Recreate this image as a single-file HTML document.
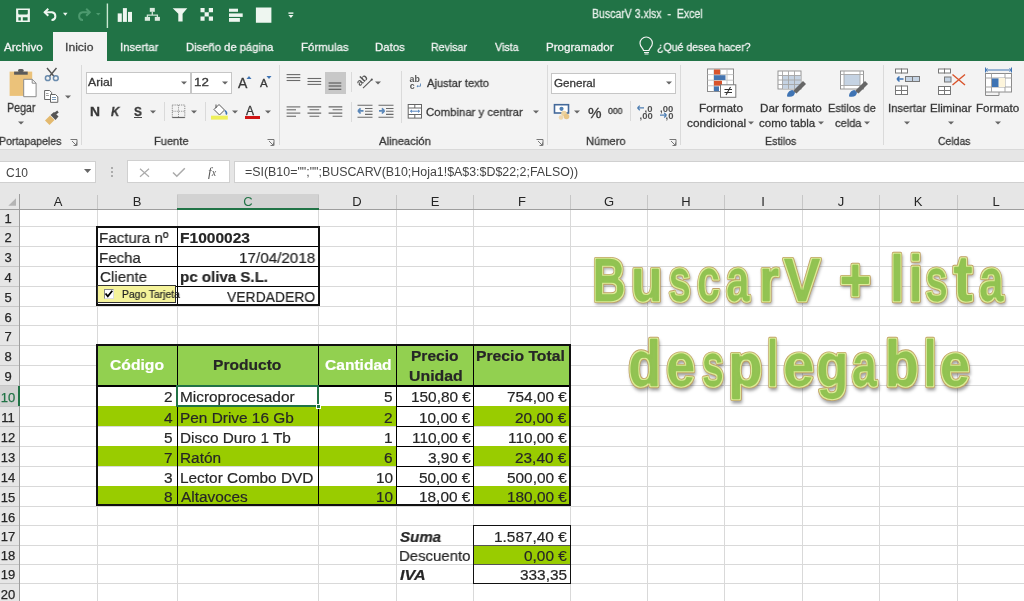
<!DOCTYPE html>
<html><head><meta charset="utf-8"><style>
html,body{margin:0;padding:0;width:1024px;height:601px;overflow:hidden;background:#fff;}
body{position:relative;font-family:"Liberation Sans", sans-serif;}
.r{position:absolute;box-sizing:border-box;}
.t{position:absolute;white-space:nowrap;line-height:1;will-change:transform;}
svg.r{overflow:visible;}
</style></head><body>
<div class="r" style="left:0.00px;top:0.00px;width:1024.00px;height:61.00px;background:#217346"></div>
<div class="r" style="left:53.00px;top:32.00px;width:54.00px;height:29.00px;background:#f3f3f3"></div>
<div class="r" style="left:0.00px;top:61.00px;width:1024.00px;height:88.00px;background:#f3f3f3"></div>
<div class="r" style="left:0.00px;top:149.00px;width:1024.00px;height:1.00px;background:#d9d9d9"></div>
<div class="r" style="left:0.00px;top:150.00px;width:1024.00px;height:60.00px;background:#e6e6e6"></div>
<svg class="r" style="left:0px;top:0px" width="300" height="32" viewBox="0 0 300 32">
<g fill="#eef6f0">
<path d="M16.1 8.4h13.8v13.5h-13.8z M18.2 9.9v3.4a1.2 1.2 0 0 0 1.2 1.2h7.2a1.2 1.2 0 0 0 1.2-1.2v-3.4z M18.4 17.3v3.2h2.4v-3.2z M22.8 17.3v3.2h4.8v-3.2z" fill-rule="evenodd"/>
</g>
<path d="M44.5 12.2h7.5a4 4 0 0 1 0 7.9h-0.5" stroke="#eef6f0" stroke-width="2" fill="none"/>
<path d="M48.3 8.8l-3.6 3.4 3.6 3.6" stroke="#eef6f0" stroke-width="2" fill="none"/>
<path d="M63 12.8h4.6l-2.3 2.9z" fill="#eef6f0"/>
<path d="M90 12.2h-7.5a4 4 0 0 0 0 7.9h0.5" stroke="#4d9a6f" stroke-width="2" fill="none"/>
<path d="M86.2 8.8l3.6 3.4-3.6 3.6" stroke="#4d9a6f" stroke-width="2" fill="none"/>
<path d="M96 13h4.5l-2.25 2.5z" fill="#4d9a6f"/>
<rect x="106.7" y="3.5" width="1.4" height="24.5" fill="#c9e7d2"/>
<g fill="#eef6f0">
 <rect x="117.7" y="13.4" width="4.1" height="8.5"/><rect x="122.9" y="8.1" width="4" height="13.8"/><rect x="128" y="11.9" width="4" height="10"/>
</g>
<g fill="#dcebe0">
 <rect x="149.8" y="7.9" width="5" height="3.9"/><rect x="144.8" y="16.9" width="5.2" height="3.9"/><rect x="154.8" y="16.9" width="5.1" height="3.9"/>
</g>
<path d="M152.3 11.8v3.3 M147.4 16.9v-1.8h10v1.8" stroke="#cfe3d5" stroke-width="1.3" fill="none"/>
<path d="M172.7 8.3h14.6l-4.7 5.5v7.8h-4.3v-7.8z" fill="#eef6f0"/>
<path d="M200.5 7.9h12.5v12.9h-12.5z M204.6 7.9v4.3h4.2v-4.3z M200.5 12.2v4.3h4.1v-4.3z M208.8 12.2v4.3h4.2v-4.3z M204.6 16.5v4.3h4.2v-4.3z" fill-rule="evenodd" fill="#eef6f0"/>
<g fill="#eef6f0"><rect x="229" y="8.7" width="9" height="3.1"/><rect x="229" y="13.4" width="13.7" height="3.5"/><rect x="229" y="18" width="10.9" height="3.8"/></g>
<rect x="255.9" y="7.5" width="15.5" height="15.25" fill="#eef6f0"/>
<rect x="288.4" y="12.4" width="5" height="1.4" fill="#eef6f0"/><path d="M288.4 14.9h5l-2.5 3.1z" fill="#eef6f0"/>
</svg>
<div class="t" style="left:591.93px;top:8.14px;font-size:12px;color:#e6efe9;font-weight:normal;font-style:normal;transform:scaleX(0.8772);transform-origin:left top;-webkit-text-stroke:0.3px #e6efe9;">BuscarV 3.xlsx&nbsp; -&nbsp; Excel</div>
<div class="t" style="left:4.30px;top:41.57px;font-size:11.5px;color:#f3f3f3;font-weight:normal;font-style:normal;transform:scaleX(1.0079);transform-origin:left top;-webkit-text-stroke:0.3px #f3f3f3;">Archivo</div>
<div class="t" style="left:64.94px;top:41.57px;font-size:11.5px;color:#444444;font-weight:normal;font-style:normal;transform:scaleX(1.0588);transform-origin:left top;-webkit-text-stroke:0.3px #444444;">Inicio</div>
<div class="t" style="left:120.32px;top:41.57px;font-size:11.5px;color:#f3f3f3;font-weight:normal;font-style:normal;transform:scaleX(0.9848);transform-origin:left top;-webkit-text-stroke:0.3px #f3f3f3;">Insertar</div>
<div class="t" style="left:185.65px;top:41.57px;font-size:11.5px;color:#f3f3f3;font-weight:normal;font-style:normal;transform:scaleX(0.9769);transform-origin:left top;-webkit-text-stroke:0.3px #f3f3f3;">Diseño de página</div>
<div class="t" style="left:300.53px;top:41.57px;font-size:11.5px;color:#f3f3f3;font-weight:normal;font-style:normal;transform:scaleX(0.9909);transform-origin:left top;-webkit-text-stroke:0.3px #f3f3f3;">Fórmulas</div>
<div class="t" style="left:374.63px;top:41.57px;font-size:11.5px;color:#f3f3f3;font-weight:normal;font-style:normal;transform:scaleX(0.9913);transform-origin:left top;-webkit-text-stroke:0.3px #f3f3f3;">Datos</div>
<div class="t" style="left:431.19px;top:41.57px;font-size:11.5px;color:#f3f3f3;font-weight:normal;font-style:normal;transform:scaleX(0.9211);transform-origin:left top;-webkit-text-stroke:0.3px #f3f3f3;">Revisar</div>
<div class="t" style="left:494.80px;top:41.57px;font-size:11.5px;color:#f3f3f3;font-weight:normal;font-style:normal;transform:scaleX(0.9294);transform-origin:left top;-webkit-text-stroke:0.3px #f3f3f3;">Vista</div>
<div class="t" style="left:545.52px;top:41.57px;font-size:11.5px;color:#f3f3f3;font-weight:normal;font-style:normal;transform:scaleX(1.0072);transform-origin:left top;-webkit-text-stroke:0.3px #f3f3f3;">Programador</div>
<svg class="r" style="left:636px;top:36px" width="20" height="20" viewBox="636 36 20 20"><path d="M643.5 50.5c0-2.2-3.5-3.7-3.5-7.3a6.2 6.2 0 0 1 12.4 0c0 3.6-3.5 5.1-3.5 7.3z M644 52.5h5 M644.5 54h4" fill="none" stroke="#f3f3f3" stroke-width="1.2"/></svg>
<div class="t" style="left:656.82px;top:41.57px;font-size:11.5px;color:#f3f3f3;font-weight:normal;font-style:normal;transform:scaleX(0.9202);transform-origin:left top;-webkit-text-stroke:0.3px #f3f3f3;">¿Qué desea hacer?</div>
<svg class="r" style="left:8px;top:66px" width="32" height="34" viewBox="8 66 32 34">
<rect x="9.6" y="71.6" width="22.6" height="24.3" fill="#ebc27a"/>
<rect x="14.1" y="71.6" width="13.6" height="3.1" fill="#5b5b5b"/>
<rect x="18" y="69" width="5.7" height="3" rx="1.5" fill="#5b5b5b"/>
<path d="M23.7 79.3h8.5l3.9 3.9v13.5h-12.4z" fill="#fff" stroke="#8a8a8a" stroke-width="1"/>
<path d="M32.2 79.3v3.9h3.9" fill="none" stroke="#8a8a8a" stroke-width="1"/>
</svg>
<div class="t" style="left:6.62px;top:102.34px;font-size:12px;color:#383838;font-weight:normal;font-style:normal;transform:scaleX(0.8903);transform-origin:left top;-webkit-text-stroke:0.3px #383838;">Pegar</div>
<svg class="r" style="left:18px;top:120.5px" width="6" height="4" viewBox="0 0 6 4"><path d="M0 0.5h6l-3 3z" fill="#666"/></svg>
<svg class="r" style="left:43px;top:66px" width="18" height="16" viewBox="43 66 18 16">
<path d="M47 68l7.5 9 M56.5 68l-7.5 9" stroke="#555" stroke-width="1.4" fill="none"/>
<circle cx="47.8" cy="78.2" r="2.4" fill="none" stroke="#6a8cae" stroke-width="1.5"/>
<circle cx="55.8" cy="78.2" r="2.4" fill="none" stroke="#6a8cae" stroke-width="1.5"/>
</svg>
<svg class="r" style="left:43px;top:89px" width="18" height="15" viewBox="43 89 18 15">
<path d="M44.6 90.5h5l2 2v7h-7z" fill="#fff" stroke="#666" stroke-width="1"/>
<path d="M50.5 94.5h5l2.3 2.3v5.5h-7.3z" fill="#fff" stroke="#666" stroke-width="1"/>
<path d="M52 97.5h4 M52 99.5h4" stroke="#6a8cae" stroke-width="0.9"/>
<path d="M46 93.5h2.5 M46 95.5h3" stroke="#888" stroke-width="0.8"/>
</svg>
<svg class="r" style="left:64.6px;top:95px" width="6" height="4" viewBox="0 0 6 4"><path d="M0 0.5h6l-3 3z" fill="#666"/></svg>
<svg class="r" style="left:43px;top:110px" width="18" height="16" viewBox="43 110 18 16">
<path d="M45 120.5l5-5 4.5 4.5-5 5z" fill="#e3b96e"/>
<path d="M50.5 115l3.5-3 4.5 4.5-3 3.5z" fill="#555"/>
<path d="M54 114.5l4-3" stroke="#555" stroke-width="2.5"/>
</svg>
<div class="t" style="left:-0.81px;top:135.57px;font-size:11.5px;color:#383838;font-weight:normal;font-style:normal;transform:scaleX(0.9218);transform-origin:left top;-webkit-text-stroke:0.3px #383838;">Portapapeles</div>
<svg class="r" style="left:69.6px;top:138.5px" width="8" height="7" viewBox="69.6 138.5 8 7"><path d="M70.1 139.0h6.5v6" fill="none" stroke="#777" stroke-width="1"/><path d="M71.6 140.5l4.5 4.5 M76.1 142.0v3h-3" fill="none" stroke="#777" stroke-width="1"/></svg>
<div class="r" style="left:80.50px;top:65.00px;width:1.00px;height:80.00px;background:#dadada"></div>
<div class="r" style="left:85.50px;top:72.10px;width:105.00px;height:21.50px;background:#fff;border:1px solid #c6c6c6"></div>
<div class="r" style="left:190.50px;top:72.10px;width:41.00px;height:21.50px;background:#fff;border:1px solid #c6c6c6"></div>
<div class="t" style="left:88.20px;top:77.27px;font-size:11.5px;color:#383838;font-weight:normal;font-style:normal;transform:scaleX(1.0637);transform-origin:left top;-webkit-text-stroke:0.3px #383838;">Arial</div>
<svg class="r" style="left:180.5px;top:80.7px" width="6" height="4" viewBox="0 0 6 4"><path d="M0 0.5h6l-3 3z" fill="#666"/></svg>
<div class="t" style="left:193.78px;top:77.27px;font-size:11.5px;color:#383838;font-weight:normal;font-style:normal;transform:scaleX(1.1604);transform-origin:left top;-webkit-text-stroke:0.3px #383838;">12</div>
<svg class="r" style="left:221.5px;top:80.7px" width="6" height="4" viewBox="0 0 6 4"><path d="M0 0.5h6l-3 3z" fill="#666"/></svg>
<div class="t" style="left:238.00px;top:75.85px;font-size:14px;color:#383838;font-weight:normal;font-style:normal;-webkit-text-stroke:0.3px #383838;">A</div>
<svg class="r" style="left:246px;top:75px" width="6" height="5" viewBox="246 75 6 5"><path d="M246.5 79h5l-2.5-3z" fill="#3f74b4"/></svg>
<div class="t" style="left:260.00px;top:77.97px;font-size:11.5px;color:#383838;font-weight:normal;font-style:normal;-webkit-text-stroke:0.3px #383838;">A</div>
<svg class="r" style="left:266px;top:75px" width="6" height="5" viewBox="266 75 6 5"><path d="M266.5 76h5l-2.5 3z" fill="#3f74b4"/></svg>
<div class="t" style="left:90.44px;top:105.54px;font-size:12px;color:#383838;font-weight:bold;font-style:normal;transform:scaleX(1.1509);transform-origin:left top;-webkit-text-stroke:0.3px #383838;">N</div>
<div class="t" style="left:110.88px;top:105.54px;font-size:12px;color:#383838;font-weight:bold;font-style:italic;transform:scaleX(0.9600);transform-origin:left top;-webkit-text-stroke:0.3px #383838;">K</div>
<div class="t" style="left:134.06px;top:105.54px;font-size:12px;color:#383838;font-weight:bold;font-style:normal;transform:scaleX(0.9763);transform-origin:left top;-webkit-text-stroke:0.3px #383838;">S</div>
<div class="r" style="left:133.80px;top:117.00px;width:8.50px;height:1.30px;background:#444"></div>
<svg class="r" style="left:150.2px;top:110px" width="6" height="4" viewBox="0 0 6 4"><path d="M0 0.5h6l-3 3z" fill="#666"/></svg>
<div class="r" style="left:163.60px;top:102.00px;width:1.00px;height:19.00px;background:#dadada"></div>
<svg class="r" style="left:171px;top:104px" width="16" height="15" viewBox="171 104 16 15">
<rect x="172.3" y="105" width="12.5" height="12.5" fill="none" stroke="#888" stroke-width="1" stroke-dasharray="1.2 1"/>
<path d="M178.5 105v12.5 M172.3 111.25h12.5" stroke="#999" stroke-width="1" stroke-dasharray="1.2 1"/>
<path d="M172.3 117.5h12.5" stroke="#666" stroke-width="1.2"/>
</svg>
<svg class="r" style="left:191.3px;top:110px" width="6" height="4" viewBox="0 0 6 4"><path d="M0 0.5h6l-3 3z" fill="#666"/></svg>
<div class="r" style="left:204.60px;top:102.00px;width:1.00px;height:19.00px;background:#dadada"></div>
<svg class="r" style="left:210px;top:102px" width="20" height="19" viewBox="210 102 20 19">
<path d="M214 109.5l5-5 5.5 5.5-5 5z" fill="#fff" stroke="#555" stroke-width="1"/>
<path d="M216 104.5v3.5" stroke="#555" stroke-width="1"/>
<path d="M225 110.5c1.5 1.5 2 3 1 4" fill="none" stroke="#3f74b4" stroke-width="1.6"/>
<rect x="211" y="115.7" width="16.8" height="3.9" fill="#eef05a"/>
</svg>
<svg class="r" style="left:232.3px;top:110px" width="6" height="4" viewBox="0 0 6 4"><path d="M0 0.5h6l-3 3z" fill="#666"/></svg>
<div class="t" style="left:245.50px;top:104.54px;font-size:12px;color:#383838;font-weight:normal;font-style:normal;-webkit-text-stroke:0.3px #383838;">A</div>
<div class="r" style="left:245.00px;top:116.00px;width:14.70px;height:2.80px;background:#d01515"></div>
<svg class="r" style="left:264.9px;top:110px" width="6" height="4" viewBox="0 0 6 4"><path d="M0 0.5h6l-3 3z" fill="#666"/></svg>
<div class="t" style="left:154.36px;top:135.77px;font-size:11.5px;color:#383838;font-weight:normal;font-style:normal;transform:scaleX(0.9623);transform-origin:left top;-webkit-text-stroke:0.3px #383838;">Fuente</div>
<svg class="r" style="left:266.5px;top:138.5px" width="8" height="7" viewBox="266.5 138.5 8 7"><path d="M267.0 139.0h6.5v6" fill="none" stroke="#777" stroke-width="1"/><path d="M268.5 140.5l4.5 4.5 M273.0 142.0v3h-3" fill="none" stroke="#777" stroke-width="1"/></svg>
<div class="r" style="left:278.80px;top:65.00px;width:1.00px;height:80.00px;background:#dadada"></div>
<svg class="r" style="left:284px;top:70px" width="64" height="26" viewBox="284 70 64 26"><path d="M286.6 74.6H300.3" stroke="#6a6a6a" stroke-width="1.1"/><path d="M286.6 77.6H300.3" stroke="#6a6a6a" stroke-width="1.1"/><path d="M286.6 80.5H300.3" stroke="#6a6a6a" stroke-width="1.1"/><path d="M307.5 78.5H321.2" stroke="#6a6a6a" stroke-width="1.1"/><path d="M307.5 81.5H321.2" stroke="#6a6a6a" stroke-width="1.1"/><path d="M307.5 84.4H321.2" stroke="#6a6a6a" stroke-width="1.1"/></svg>
<div class="r" style="left:324.70px;top:72.10px;width:21.10px;height:21.50px;background:#c8c8c8"></div>
<svg class="r" style="left:326px;top:80px" width="18" height="12" viewBox="326 80 18 12"><path d="M328.6 83H341.3" stroke="#555" stroke-width="1.1"/><path d="M328.6 86H341.3" stroke="#555" stroke-width="1.1"/><path d="M328.6 89.3H341.3" stroke="#555" stroke-width="1.1"/></svg>
<div class="r" style="left:350.50px;top:72.00px;width:1.00px;height:20.00px;background:#dadada"></div>
<div class="r" style="left:350.50px;top:102.00px;width:1.00px;height:19.50px;background:#dadada"></div>
<svg class="r" style="left:355px;top:73px" width="20" height="18" viewBox="355 73 20 18">
<text x="0" y="0" font-size="10" font-weight="bold" font-family="Liberation Sans" fill="#555" transform="translate(360 86.5) rotate(-45)">ab</text>
<path d="M363 88.2l8.5-8.3" stroke="#555" stroke-width="1.1"/><circle cx="371.8" cy="79.6" r="1.1" fill="#555"/>
</svg>
<svg class="r" style="left:375.4px;top:80.7px" width="6" height="4" viewBox="0 0 6 4"><path d="M0 0.5h6l-3 3z" fill="#666"/></svg>
<div class="r" style="left:400.50px;top:70.70px;width:1.00px;height:52.80px;background:#dadada"></div>
<svg class="r" style="left:407px;top:73px" width="18" height="18" viewBox="407 73 18 18">
<text x="409.5" y="81.6" font-size="8.8" font-weight="bold" font-family="Liberation Sans" fill="#555">ab</text>
<text x="409.8" y="88.6" font-size="8.8" font-weight="bold" font-family="Liberation Sans" fill="#555">c</text>
<path d="M420.5 83.5v2.7h-3" fill="none" stroke="#5b87b8" stroke-width="0.9"/><path d="M416.5 86.2l1.5-1.2v2.4z" fill="#5b87b8"/>
</svg>
<div class="t" style="left:426.80px;top:77.57px;font-size:11.5px;color:#383838;font-weight:normal;font-style:normal;transform:scaleX(0.9701);transform-origin:left top;-webkit-text-stroke:0.3px #383838;">Ajustar texto</div>
<svg class="r" style="left:284px;top:104px" width="64" height="15" viewBox="284 104 64 15"><path d="M286.6 106.9H300.3" stroke="#6a6a6a" stroke-width="1.1"/><path d="M286.6 109.8H296" stroke="#6a6a6a" stroke-width="1.1"/><path d="M286.6 113.1H300.3" stroke="#6a6a6a" stroke-width="1.1"/><path d="M286.6 116.25H296" stroke="#6a6a6a" stroke-width="1.1"/><path d="M307.5 106.9h13.7 M309.5 109.8h9.7 M307.5 113.1h13.7 M309.5 116.25h9.7" stroke="#6a6a6a" stroke-width="1.1"/><path d="M328.6 106.9h13.7 M332.6 109.8h9.7 M328.6 113.1h13.7 M332.6 116.25h9.7" stroke="#6a6a6a" stroke-width="1.1"/></svg>
<svg class="r" style="left:355px;top:103px" width="40" height="17" viewBox="355 103 40 17">
<path d="M357.5 105.3h15 M365 108.5h7.5 M365 111.2h7.5 M365 114.4h7.5 M357.5 117.2h15" stroke="#6a6a6a" stroke-width="1.1"/>
<path d="M358 110.9h5.5 M358 110.9l2.6-2.6 M358 110.9l2.6 2.6" stroke="#5b87b8" stroke-width="1.7" fill="none"/>
<path d="M378.5 105.3h15 M386 108.5h7.5 M386 111.2h7.5 M386 114.4h7.5 M378.5 117.2h15" stroke="#6a6a6a" stroke-width="1.1"/>
<path d="M379 110.9h5.5 M384.5 110.9l-2.6-2.6 M384.5 110.9l-2.6 2.6" stroke="#5b87b8" stroke-width="1.7" fill="none"/>
</svg>
<svg class="r" style="left:406px;top:103px" width="18" height="17" viewBox="406 103 18 17">
<rect x="408.2" y="104.5" width="13.3" height="13.6" fill="#fff" stroke="#666" stroke-width="1"/>
<path d="M408.2 108h13.3 M408.2 114.5h13.3 M414.8 104.5v3.5 M414.8 114.5v3.5" stroke="#666" stroke-width="1"/>
<path d="M410.5 111.2h9 M410.5 111.2l1.5-1.3 M410.5 111.2l1.5 1.3 M419.5 111.2l-1.5-1.3 M419.5 111.2l-1.5 1.3" stroke="#3f74b4" stroke-width="0.9"/>
</svg>
<div class="t" style="left:426.30px;top:106.87px;font-size:11.5px;color:#383838;font-weight:normal;font-style:normal;transform:scaleX(0.9902);transform-origin:left top;-webkit-text-stroke:0.3px #383838;">Combinar y centrar</div>
<svg class="r" style="left:532.6px;top:110.3px" width="6" height="4" viewBox="0 0 6 4"><path d="M0 0.5h6l-3 3z" fill="#666"/></svg>
<div class="t" style="left:379.40px;top:135.77px;font-size:11.5px;color:#383838;font-weight:normal;font-style:normal;transform:scaleX(0.9757);transform-origin:left top;-webkit-text-stroke:0.3px #383838;">Alineación</div>
<svg class="r" style="left:536.2px;top:138.5px" width="8" height="7" viewBox="536.2 138.5 8 7"><path d="M536.7 139.0h6.5v6" fill="none" stroke="#777" stroke-width="1"/><path d="M538.2 140.5l4.5 4.5 M542.7 142.0v3h-3" fill="none" stroke="#777" stroke-width="1"/></svg>
<div class="r" style="left:546.60px;top:65.00px;width:1.00px;height:80.00px;background:#dadada"></div>
<div class="r" style="left:551.25px;top:72.50px;width:124.35px;height:21.10px;background:#fff;border:1px solid #c6c6c6"></div>
<div class="t" style="left:554.29px;top:77.57px;font-size:11.5px;color:#383838;font-weight:normal;font-style:normal;transform:scaleX(1.0113);transform-origin:left top;-webkit-text-stroke:0.3px #383838;">General</div>
<svg class="r" style="left:665.9px;top:80.7px" width="6" height="4" viewBox="0 0 6 4"><path d="M0 0.5h6l-3 3z" fill="#666"/></svg>
<svg class="r" style="left:552px;top:102px" width="20" height="19" viewBox="552 102 20 19">
<rect x="554.5" y="104.7" width="14" height="8.3" fill="#fff" stroke="#44699a" stroke-width="1.6"/>
<circle cx="561.5" cy="108.8" r="2.1" fill="#4f7fb3"/>
<circle cx="564" cy="113.5" r="2.8" fill="#ecd3a0"/><circle cx="566.5" cy="116.5" r="2.8" fill="#e8c688"/><circle cx="561" cy="117.5" r="2.3" fill="#eed8b0"/>
</svg>
<svg class="r" style="left:574.2px;top:110px" width="6" height="4" viewBox="0 0 6 4"><path d="M0 0.5h6l-3 3z" fill="#666"/></svg>
<div class="t" style="left:587.86px;top:105.95px;font-size:14px;color:#383838;font-weight:normal;font-style:normal;transform:scaleX(1.0870);transform-origin:left top;-webkit-text-stroke:0.3px #383838;">%</div>
<div class="t" style="left:607.76px;top:107.08px;font-size:9px;color:#383838;font-weight:normal;font-style:normal;transform:scaleX(0.9655);transform-origin:left top;-webkit-text-stroke:0.3px #383838;">000</div>
<div class="r" style="left:629.80px;top:101.40px;width:1.00px;height:19.60px;background:#dadada"></div>
<svg class="r" style="left:635px;top:103px" width="40" height="17" viewBox="635 103 40 17">
<g font-size="9.5" font-weight="bold" font-family="Liberation Sans" fill="#505050">
<text x="644.5" y="111.6">,0</text>
<text x="639.5" y="118.8">,00</text>
<text x="660" y="111.6">,00</text>
<text x="665.5" y="118.8">,0</text>
</g>
<path d="M637.5 107.9h6.5 M637.5 107.9l2.3-2.3 M637.5 107.9l2.3 2.3" stroke="#4f7fb3" stroke-width="1.3" fill="none"/>
<path d="M660 115.2h6.5 M666.5 115.2l-2.3-2.3 M666.5 115.2l-2.3 2.3" stroke="#4f7fb3" stroke-width="1.3" fill="none"/>
</svg>
<div class="t" style="left:586.05px;top:135.77px;font-size:11.5px;color:#383838;font-weight:normal;font-style:normal;transform:scaleX(0.9666);transform-origin:left top;-webkit-text-stroke:0.3px #383838;">Número</div>
<svg class="r" style="left:669.4px;top:138.5px" width="8" height="7" viewBox="669.4 138.5 8 7"><path d="M669.9 139.0h6.5v6" fill="none" stroke="#777" stroke-width="1"/><path d="M671.4 140.5l4.5 4.5 M675.9 142.0v3h-3" fill="none" stroke="#777" stroke-width="1"/></svg>
<div class="r" style="left:680.30px;top:65.00px;width:1.00px;height:80.00px;background:#dadada"></div>
<svg class="r" style="left:705px;top:66px" width="34" height="33" viewBox="705 66 34 33">
<rect x="707.5" y="69" width="26" height="22.5" fill="#fff" stroke="#8c8c8c" stroke-width="1"/>
<path d="M707.5 74.6h26 M707.5 80.2h26 M707.5 85.8h26 M714 69v22.5 M720.5 69v22.5 M727 69v22.5" stroke="#c0c0c0" stroke-width="0.9"/>
<rect x="714" y="69.5" width="6" height="5" fill="#d9542c"/>
<rect x="714" y="75.2" width="11.5" height="4.8" fill="#4575b0"/>
<rect x="714" y="80.8" width="8" height="4.8" fill="#d9542c"/>
<rect x="714" y="86.4" width="5" height="4.8" fill="#4575b0"/>
<rect x="720.5" y="84.8" width="15.3" height="12.5" fill="#fff" stroke="#777" stroke-width="1"/>
<path d="M724.5 89.5h7.5 M724.5 92.5h7.5 M730.5 87l-4.5 8" stroke="#333" stroke-width="1.1"/>
</svg>
<div class="t" style="left:698.60px;top:102.77px;font-size:11.5px;color:#383838;font-weight:normal;font-style:normal;transform:scaleX(1.0265);transform-origin:left top;-webkit-text-stroke:0.3px #383838;">Formato</div>
<div class="t" style="left:687.02px;top:117.87px;font-size:11.5px;color:#383838;font-weight:normal;font-style:normal;transform:scaleX(1.0265);transform-origin:left top;-webkit-text-stroke:0.3px #383838;">condicional</div>
<svg class="r" style="left:748.3px;top:120.5px" width="6" height="4" viewBox="0 0 6 4"><path d="M0 0.5h6l-3 3z" fill="#666"/></svg>
<svg class="r" style="left:775px;top:68px" width="34" height="31" viewBox="775 68 34 31">
<rect x="778" y="71" width="23" height="18" fill="#fff" stroke="#8c8c8c" stroke-width="0.9"/>
<rect x="782.5" y="75.5" width="18" height="13" fill="#c5d3e3"/>
<path d="M778 75.5h23 M778 80h23 M778 84.5h23 M782.5 71v18 M788.5 71v18 M794.5 71v18" stroke="#a5a5a5" stroke-width="0.9"/>
<path d="M793 91l10-10 3 3-9.5 9.5z" fill="#666"/>
<path d="M787 96.5c0-3.5 2-6 5.5-6.5 l2.5 2.5c-0.5 3.5-3 5-8 4z" fill="#3f74b4"/>
</svg>
<div class="t" style="left:759.61px;top:102.77px;font-size:11.5px;color:#383838;font-weight:normal;font-style:normal;transform:scaleX(1.0168);transform-origin:left top;-webkit-text-stroke:0.3px #383838;">Dar formato</div>
<div class="t" style="left:758.62px;top:117.87px;font-size:11.5px;color:#383838;font-weight:normal;font-style:normal;-webkit-text-stroke:0.3px #383838;">como tabla</div>
<svg class="r" style="left:817.6px;top:120.5px" width="6" height="4" viewBox="0 0 6 4"><path d="M0 0.5h6l-3 3z" fill="#666"/></svg>
<svg class="r" style="left:838px;top:68px" width="34" height="31" viewBox="838 68 34 31">
<rect x="840.5" y="71" width="23" height="18" fill="#fff" stroke="#8c8c8c" stroke-width="0.9"/>
<rect x="844" y="74.5" width="16" height="11" fill="#c5d3e3"/>
<path d="M840.5 74.5h23 M840.5 85.5h23 M844 71v18 M860 71v18" stroke="#a5a5a5" stroke-width="0.9"/>
<path d="M855 91l10-10 3 3-9.5 9.5z" fill="#666"/>
<path d="M849 96.5c0-3.5 2-6 5.5-6.5 l2.5 2.5c-0.5 3.5-3 5-8 4z" fill="#3f74b4"/>
</svg>
<div class="t" style="left:827.56px;top:102.77px;font-size:11.5px;color:#383838;font-weight:normal;font-style:normal;transform:scaleX(0.9584);transform-origin:left top;-webkit-text-stroke:0.3px #383838;">Estilos de</div>
<div class="t" style="left:834.94px;top:117.87px;font-size:11.5px;color:#383838;font-weight:normal;font-style:normal;transform:scaleX(0.9651);transform-origin:left top;-webkit-text-stroke:0.3px #383838;">celda</div>
<svg class="r" style="left:863.5px;top:120.5px" width="6" height="4" viewBox="0 0 6 4"><path d="M0 0.5h6l-3 3z" fill="#666"/></svg>
<div class="t" style="left:765.19px;top:135.77px;font-size:11.5px;color:#383838;font-weight:normal;font-style:normal;transform:scaleX(0.9257);transform-origin:left top;-webkit-text-stroke:0.3px #383838;">Estilos</div>
<div class="r" style="left:882.75px;top:65.00px;width:1.00px;height:80.00px;background:#dadada"></div>
<svg class="r" style="left:893px;top:66px" width="30" height="30" viewBox="893 66 30 30">
<g fill="#fff" stroke="#777" stroke-width="1">
<rect x="895.5" y="69" width="6" height="4"/><rect x="901.5" y="69" width="6" height="4"/>
<rect x="895.5" y="86" width="6" height="4.5"/><rect x="901.5" y="86" width="6" height="4.5"/>
<rect x="895.5" y="90.5" width="6" height="4"/><rect x="901.5" y="90.5" width="6" height="4"/>
</g>
<g fill="#c5d3e3" stroke="#777" stroke-width="1"><rect x="905.5" y="76.5" width="7" height="5"/><rect x="912.5" y="76.5" width="7" height="5"/></g>
<path d="M897 79h6.5 M897 79l2.5-2.5 M897 79l2.5 2.5" stroke="#3f74b4" stroke-width="1.5" fill="none"/>
</svg>
<div class="t" style="left:887.72px;top:102.77px;font-size:11.5px;color:#383838;font-weight:normal;font-style:normal;transform:scaleX(0.9769);transform-origin:left top;-webkit-text-stroke:0.3px #383838;">Insertar</div>
<svg class="r" style="left:904px;top:120.5px" width="6" height="4" viewBox="0 0 6 4"><path d="M0 0.5h6l-3 3z" fill="#666"/></svg>
<svg class="r" style="left:936px;top:66px" width="32" height="30" viewBox="936 66 32 30">
<g fill="#fff" stroke="#777" stroke-width="1">
<rect x="938.5" y="69" width="6" height="4"/><rect x="944.5" y="69" width="6" height="4"/>
<rect x="938.5" y="86.5" width="6" height="4"/><rect x="944.5" y="86.5" width="6" height="4"/>
<rect x="938.5" y="90.5" width="6" height="4"/><rect x="944.5" y="90.5" width="6" height="4"/>
</g>
<rect x="944.5" y="77" width="6.5" height="5" fill="#c5d3e3" stroke="#777" stroke-width="1"/>
<path d="M952.5 74.5l12.5 10.5 M965 74.5l-12.5 10.5" stroke="#d9542c" stroke-width="1.4"/>
</svg>
<div class="t" style="left:930.03px;top:102.77px;font-size:11.5px;color:#383838;font-weight:normal;font-style:normal;-webkit-text-stroke:0.3px #383838;">Eliminar</div>
<svg class="r" style="left:947.7px;top:120.5px" width="6" height="4" viewBox="0 0 6 4"><path d="M0 0.5h6l-3 3z" fill="#666"/></svg>
<svg class="r" style="left:983px;top:65px" width="32" height="33" viewBox="983 65 32 33">
<path d="M985.5 70h26 M985.5 67.5v5 M1011.5 67.5v5 M985.5 70l2-1.5 M985.5 70l2 1.5 M1011.5 70l-2-1.5 M1011.5 70l-2 1.5" stroke="#3f74b4" stroke-width="1" fill="none"/>
<rect x="985.5" y="73.5" width="26" height="18.5" fill="#fff" stroke="#8c8c8c" stroke-width="1"/>
<path d="M985.5 78h26 M985.5 87h26 M991.5 73.5v18.5 M1005 73.5v18.5" stroke="#a5a5a5" stroke-width="1"/>
<rect x="998.5" y="78" width="6.5" height="9" fill="#fdf5dc"/>
<rect x="992" y="78.5" width="6.5" height="8.5" fill="#3f74b4"/>
<path d="M985.5 92v3.5h13.5v-3.5" fill="none" stroke="#8c8c8c" stroke-width="1"/>
</svg>
<div class="t" style="left:975.92px;top:102.77px;font-size:11.5px;color:#383838;font-weight:normal;font-style:normal;transform:scaleX(1.0096);transform-origin:left top;-webkit-text-stroke:0.3px #383838;">Formato</div>
<svg class="r" style="left:994.6px;top:120.5px" width="6" height="4" viewBox="0 0 6 4"><path d="M0 0.5h6l-3 3z" fill="#666"/></svg>
<div class="t" style="left:938.25px;top:135.77px;font-size:11.5px;color:#383838;font-weight:normal;font-style:normal;transform:scaleX(0.9047);transform-origin:left top;-webkit-text-stroke:0.3px #383838;">Celdas</div>
<div class="r" style="left:-1.00px;top:160.50px;width:97.20px;height:22.80px;background:#fff;border:1px solid #d0d0d0"></div>
<div class="t" style="left:6.31px;top:167.04px;font-size:12px;color:#444;font-weight:normal;font-style:normal;transform:scaleX(0.9893);transform-origin:left top;">C10</div>
<svg class="r" style="left:83px;top:168px" width="10" height="6" viewBox="83 168 10 6"><path d="M84 169h7.2l-3.6 4z" fill="#666"/></svg>
<div class="r" style="left:111.00px;top:167.20px;width:1.60px;height:1.60px;background:#999;border-radius:1px"></div>
<div class="r" style="left:111.00px;top:171.20px;width:1.60px;height:1.60px;background:#999;border-radius:1px"></div>
<div class="r" style="left:111.00px;top:175.20px;width:1.60px;height:1.60px;background:#999;border-radius:1px"></div>
<div class="r" style="left:126.80px;top:160.30px;width:103.30px;height:23.10px;background:#fff;border:1px solid #d0d0d0"></div>
<svg class="r" style="left:138px;top:166px" width="50" height="12" viewBox="138 166 50 12"><path d="M140 168.8l9 8 M149 168.8l-9 8" stroke="#aaa" stroke-width="1.2"/><path d="M173 172.5l3.8 3.8 8-8" stroke="#aaa" stroke-width="1.5" fill="none"/></svg>
<div class="t" style="left:207.5px;top:165px;font-size:13px;font-family:'Liberation Serif',serif;font-style:italic;color:#555;">f<span style="font-size:10px">x</span></div>
<div class="r" style="left:234.30px;top:160.50px;width:800.00px;height:22.80px;background:#fff;border:1px solid #d0d0d0"></div>
<div class="t" style="left:245.10px;top:166.49px;font-size:12.3px;color:#444;font-weight:normal;font-style:normal;transform:scaleX(1.0086);transform-origin:left top;">=SI(B10=&quot;&quot;;&quot;&quot;;BUSCARV(B10;Hoja1!$A$3:$D$22;2;FALSO))</div>
<div class="r" style="left:0.00px;top:209.30px;width:1024.00px;height:391.70px;background:#fff"></div>
<div class="r" style="left:0.00px;top:193.50px;width:1024.00px;height:15.80px;background:#e6e6e6"></div>
<div class="r" style="left:0.00px;top:209.30px;width:19.50px;height:391.70px;background:#e6e6e6"></div>
<div class="r" style="left:177.00px;top:193.50px;width:141.50px;height:15.80px;background:#d2d2d2"></div>
<div class="r" style="left:0.00px;top:385.50px;width:19.50px;height:20.70px;background:#d2d2d2"></div>
<div class="r" style="left:96.50px;top:209.30px;width:1.00px;height:391.70px;background:#d9d9d9"></div>
<div class="r" style="left:176.50px;top:209.30px;width:1.00px;height:391.70px;background:#d9d9d9"></div>
<div class="r" style="left:318.00px;top:209.30px;width:1.00px;height:391.70px;background:#d9d9d9"></div>
<div class="r" style="left:395.50px;top:209.30px;width:1.00px;height:391.70px;background:#d9d9d9"></div>
<div class="r" style="left:473.00px;top:209.30px;width:1.00px;height:391.70px;background:#d9d9d9"></div>
<div class="r" style="left:569.50px;top:209.30px;width:1.00px;height:391.70px;background:#d9d9d9"></div>
<div class="r" style="left:646.50px;top:209.30px;width:1.00px;height:391.70px;background:#d9d9d9"></div>
<div class="r" style="left:724.00px;top:209.30px;width:1.00px;height:391.70px;background:#d9d9d9"></div>
<div class="r" style="left:801.50px;top:209.30px;width:1.00px;height:391.70px;background:#d9d9d9"></div>
<div class="r" style="left:879.00px;top:209.30px;width:1.00px;height:391.70px;background:#d9d9d9"></div>
<div class="r" style="left:956.50px;top:209.30px;width:1.00px;height:391.70px;background:#d9d9d9"></div>
<div class="r" style="left:1034.00px;top:209.30px;width:1.00px;height:391.70px;background:#d9d9d9"></div>
<div class="r" style="left:19.50px;top:226.30px;width:1004.50px;height:1.00px;background:#d9d9d9"></div>
<div class="r" style="left:19.50px;top:246.00px;width:1004.50px;height:1.00px;background:#d9d9d9"></div>
<div class="r" style="left:19.50px;top:265.80px;width:1004.50px;height:1.00px;background:#d9d9d9"></div>
<div class="r" style="left:19.50px;top:285.70px;width:1004.50px;height:1.00px;background:#d9d9d9"></div>
<div class="r" style="left:19.50px;top:305.50px;width:1004.50px;height:1.00px;background:#d9d9d9"></div>
<div class="r" style="left:19.50px;top:325.30px;width:1004.50px;height:1.00px;background:#d9d9d9"></div>
<div class="r" style="left:19.50px;top:345.00px;width:1004.50px;height:1.00px;background:#d9d9d9"></div>
<div class="r" style="left:19.50px;top:365.00px;width:1004.50px;height:1.00px;background:#d9d9d9"></div>
<div class="r" style="left:19.50px;top:385.00px;width:1004.50px;height:1.00px;background:#d9d9d9"></div>
<div class="r" style="left:19.50px;top:405.70px;width:1004.50px;height:1.00px;background:#d9d9d9"></div>
<div class="r" style="left:19.50px;top:425.80px;width:1004.50px;height:1.00px;background:#d9d9d9"></div>
<div class="r" style="left:19.50px;top:445.80px;width:1004.50px;height:1.00px;background:#d9d9d9"></div>
<div class="r" style="left:19.50px;top:465.80px;width:1004.50px;height:1.00px;background:#d9d9d9"></div>
<div class="r" style="left:19.50px;top:485.80px;width:1004.50px;height:1.00px;background:#d9d9d9"></div>
<div class="r" style="left:19.50px;top:505.70px;width:1004.50px;height:1.00px;background:#d9d9d9"></div>
<div class="r" style="left:19.50px;top:525.30px;width:1004.50px;height:1.00px;background:#d9d9d9"></div>
<div class="r" style="left:19.50px;top:544.80px;width:1004.50px;height:1.00px;background:#d9d9d9"></div>
<div class="r" style="left:19.50px;top:564.10px;width:1004.50px;height:1.00px;background:#d9d9d9"></div>
<div class="r" style="left:19.50px;top:583.00px;width:1004.50px;height:1.00px;background:#d9d9d9"></div>
<div class="r" style="left:19.50px;top:602.70px;width:1004.50px;height:1.00px;background:#d9d9d9"></div>
<div class="r" style="left:96.50px;top:194.50px;width:1.00px;height:14.80px;background:#c6c6c6"></div>
<div class="r" style="left:176.50px;top:194.50px;width:1.00px;height:14.80px;background:#c6c6c6"></div>
<div class="r" style="left:318.00px;top:194.50px;width:1.00px;height:14.80px;background:#c6c6c6"></div>
<div class="r" style="left:395.50px;top:194.50px;width:1.00px;height:14.80px;background:#c6c6c6"></div>
<div class="r" style="left:473.00px;top:194.50px;width:1.00px;height:14.80px;background:#c6c6c6"></div>
<div class="r" style="left:569.50px;top:194.50px;width:1.00px;height:14.80px;background:#c6c6c6"></div>
<div class="r" style="left:646.50px;top:194.50px;width:1.00px;height:14.80px;background:#c6c6c6"></div>
<div class="r" style="left:724.00px;top:194.50px;width:1.00px;height:14.80px;background:#c6c6c6"></div>
<div class="r" style="left:801.50px;top:194.50px;width:1.00px;height:14.80px;background:#c6c6c6"></div>
<div class="r" style="left:879.00px;top:194.50px;width:1.00px;height:14.80px;background:#c6c6c6"></div>
<div class="r" style="left:956.50px;top:194.50px;width:1.00px;height:14.80px;background:#c6c6c6"></div>
<div class="r" style="left:1034.00px;top:194.50px;width:1.00px;height:14.80px;background:#c6c6c6"></div>
<div class="r" style="left:0.00px;top:226.30px;width:19.50px;height:1.00px;background:#c6c6c6"></div>
<div class="r" style="left:0.00px;top:246.00px;width:19.50px;height:1.00px;background:#c6c6c6"></div>
<div class="r" style="left:0.00px;top:265.80px;width:19.50px;height:1.00px;background:#c6c6c6"></div>
<div class="r" style="left:0.00px;top:285.70px;width:19.50px;height:1.00px;background:#c6c6c6"></div>
<div class="r" style="left:0.00px;top:305.50px;width:19.50px;height:1.00px;background:#c6c6c6"></div>
<div class="r" style="left:0.00px;top:325.30px;width:19.50px;height:1.00px;background:#c6c6c6"></div>
<div class="r" style="left:0.00px;top:345.00px;width:19.50px;height:1.00px;background:#c6c6c6"></div>
<div class="r" style="left:0.00px;top:365.00px;width:19.50px;height:1.00px;background:#c6c6c6"></div>
<div class="r" style="left:0.00px;top:385.00px;width:19.50px;height:1.00px;background:#c6c6c6"></div>
<div class="r" style="left:0.00px;top:405.70px;width:19.50px;height:1.00px;background:#c6c6c6"></div>
<div class="r" style="left:0.00px;top:425.80px;width:19.50px;height:1.00px;background:#c6c6c6"></div>
<div class="r" style="left:0.00px;top:445.80px;width:19.50px;height:1.00px;background:#c6c6c6"></div>
<div class="r" style="left:0.00px;top:465.80px;width:19.50px;height:1.00px;background:#c6c6c6"></div>
<div class="r" style="left:0.00px;top:485.80px;width:19.50px;height:1.00px;background:#c6c6c6"></div>
<div class="r" style="left:0.00px;top:505.70px;width:19.50px;height:1.00px;background:#c6c6c6"></div>
<div class="r" style="left:0.00px;top:525.30px;width:19.50px;height:1.00px;background:#c6c6c6"></div>
<div class="r" style="left:0.00px;top:544.80px;width:19.50px;height:1.00px;background:#c6c6c6"></div>
<div class="r" style="left:0.00px;top:564.10px;width:19.50px;height:1.00px;background:#c6c6c6"></div>
<div class="r" style="left:0.00px;top:583.00px;width:19.50px;height:1.00px;background:#c6c6c6"></div>
<div class="r" style="left:0.00px;top:602.70px;width:19.50px;height:1.00px;background:#c6c6c6"></div>
<div class="r" style="left:0.00px;top:208.80px;width:1024.00px;height:1.00px;background:#9e9e9e"></div>
<div class="r" style="left:19.00px;top:193.50px;width:1.00px;height:407.50px;background:#9e9e9e"></div>
<div class="r" style="left:177.00px;top:208.00px;width:141.50px;height:2.00px;background:#217346"></div>
<div class="r" style="left:18.00px;top:385.50px;width:2.00px;height:20.70px;background:#217346"></div>
<svg class="r" style="left:7px;top:197px" width="11" height="10" viewBox="7 197 11 10"><path d="M16 198.3v7.5h-7.7z" fill="#b4b4b4"/></svg>
<div class="t" style="left:-341.75px;width:800px;text-align:center;top:195.30px;font-size:13px;color:#262626;font-weight:normal;font-style:normal;">A</div>
<div class="t" style="left:-263.00px;width:800px;text-align:center;top:195.30px;font-size:13px;color:#262626;font-weight:normal;font-style:normal;">B</div>
<div class="t" style="left:-152.25px;width:800px;text-align:center;top:195.30px;font-size:13px;color:#217346;font-weight:normal;font-style:normal;">C</div>
<div class="t" style="left:-42.75px;width:800px;text-align:center;top:195.30px;font-size:13px;color:#262626;font-weight:normal;font-style:normal;">D</div>
<div class="t" style="left:34.75px;width:800px;text-align:center;top:195.30px;font-size:13px;color:#262626;font-weight:normal;font-style:normal;">E</div>
<div class="t" style="left:121.75px;width:800px;text-align:center;top:195.30px;font-size:13px;color:#262626;font-weight:normal;font-style:normal;">F</div>
<div class="t" style="left:208.50px;width:800px;text-align:center;top:195.30px;font-size:13px;color:#262626;font-weight:normal;font-style:normal;">G</div>
<div class="t" style="left:285.75px;width:800px;text-align:center;top:195.30px;font-size:13px;color:#262626;font-weight:normal;font-style:normal;">H</div>
<div class="t" style="left:363.25px;width:800px;text-align:center;top:195.30px;font-size:13px;color:#262626;font-weight:normal;font-style:normal;">I</div>
<div class="t" style="left:440.75px;width:800px;text-align:center;top:195.30px;font-size:13px;color:#262626;font-weight:normal;font-style:normal;">J</div>
<div class="t" style="left:518.25px;width:800px;text-align:center;top:195.30px;font-size:13px;color:#262626;font-weight:normal;font-style:normal;">K</div>
<div class="t" style="left:595.75px;width:800px;text-align:center;top:195.30px;font-size:13px;color:#262626;font-weight:normal;font-style:normal;">L</div>
<div class="t" style="left:-392.10px;width:800px;text-align:center;top:211.60px;font-size:13px;color:#262626;font-weight:normal;font-style:normal;-webkit-text-stroke:0.25px #262626;">1</div>
<div class="t" style="left:-392.10px;width:800px;text-align:center;top:231.30px;font-size:13px;color:#262626;font-weight:normal;font-style:normal;-webkit-text-stroke:0.25px #262626;">2</div>
<div class="t" style="left:-392.10px;width:800px;text-align:center;top:251.10px;font-size:13px;color:#262626;font-weight:normal;font-style:normal;-webkit-text-stroke:0.25px #262626;">3</div>
<div class="t" style="left:-392.10px;width:800px;text-align:center;top:271.00px;font-size:13px;color:#262626;font-weight:normal;font-style:normal;-webkit-text-stroke:0.25px #262626;">4</div>
<div class="t" style="left:-392.10px;width:800px;text-align:center;top:290.80px;font-size:13px;color:#262626;font-weight:normal;font-style:normal;-webkit-text-stroke:0.25px #262626;">5</div>
<div class="t" style="left:-392.10px;width:800px;text-align:center;top:310.60px;font-size:13px;color:#262626;font-weight:normal;font-style:normal;-webkit-text-stroke:0.25px #262626;">6</div>
<div class="t" style="left:-392.10px;width:800px;text-align:center;top:330.30px;font-size:13px;color:#262626;font-weight:normal;font-style:normal;-webkit-text-stroke:0.25px #262626;">7</div>
<div class="t" style="left:-392.10px;width:800px;text-align:center;top:350.30px;font-size:13px;color:#262626;font-weight:normal;font-style:normal;-webkit-text-stroke:0.25px #262626;">8</div>
<div class="t" style="left:-392.10px;width:800px;text-align:center;top:370.30px;font-size:13px;color:#262626;font-weight:normal;font-style:normal;-webkit-text-stroke:0.25px #262626;">9</div>
<div class="t" style="left:-392.10px;width:800px;text-align:center;top:391.00px;font-size:13px;color:#217346;font-weight:normal;font-style:normal;-webkit-text-stroke:0.25px #217346;">10</div>
<div class="t" style="left:-392.10px;width:800px;text-align:center;top:411.10px;font-size:13px;color:#262626;font-weight:normal;font-style:normal;-webkit-text-stroke:0.25px #262626;">11</div>
<div class="t" style="left:-392.10px;width:800px;text-align:center;top:431.10px;font-size:13px;color:#262626;font-weight:normal;font-style:normal;-webkit-text-stroke:0.25px #262626;">12</div>
<div class="t" style="left:-392.10px;width:800px;text-align:center;top:451.10px;font-size:13px;color:#262626;font-weight:normal;font-style:normal;-webkit-text-stroke:0.25px #262626;">13</div>
<div class="t" style="left:-392.10px;width:800px;text-align:center;top:471.10px;font-size:13px;color:#262626;font-weight:normal;font-style:normal;-webkit-text-stroke:0.25px #262626;">14</div>
<div class="t" style="left:-392.10px;width:800px;text-align:center;top:491.00px;font-size:13px;color:#262626;font-weight:normal;font-style:normal;-webkit-text-stroke:0.25px #262626;">15</div>
<div class="t" style="left:-392.10px;width:800px;text-align:center;top:510.60px;font-size:13px;color:#262626;font-weight:normal;font-style:normal;-webkit-text-stroke:0.25px #262626;">16</div>
<div class="t" style="left:-392.10px;width:800px;text-align:center;top:530.10px;font-size:13px;color:#262626;font-weight:normal;font-style:normal;-webkit-text-stroke:0.25px #262626;">17</div>
<div class="t" style="left:-392.10px;width:800px;text-align:center;top:549.40px;font-size:13px;color:#262626;font-weight:normal;font-style:normal;-webkit-text-stroke:0.25px #262626;">18</div>
<div class="t" style="left:-392.10px;width:800px;text-align:center;top:568.30px;font-size:13px;color:#262626;font-weight:normal;font-style:normal;-webkit-text-stroke:0.25px #262626;">19</div>
<div class="t" style="left:-392.10px;width:800px;text-align:center;top:588.00px;font-size:13px;color:#262626;font-weight:normal;font-style:normal;-webkit-text-stroke:0.25px #262626;">20</div>
<div class="r" style="left:176.50px;top:226.80px;width:1.00px;height:79.20px;background:#000"></div>
<div class="r" style="left:97.00px;top:246.00px;width:221.50px;height:1.00px;background:#000"></div>
<div class="r" style="left:97.00px;top:265.80px;width:221.50px;height:1.00px;background:#000"></div>
<div class="r" style="left:97.00px;top:285.70px;width:221.50px;height:1.00px;background:#000"></div>
<div class="t" style="left:99.27px;top:229.76px;font-size:15.4px;color:#262626;font-weight:normal;font-style:normal;transform:scaleX(0.9819);transform-origin:left top;-webkit-text-stroke:0.2px #262626;">Factura nº</div>
<div class="t" style="left:179.99px;top:229.76px;font-size:15.4px;color:#262626;font-weight:bold;font-style:normal;transform:scaleX(1.0096);transform-origin:left top;-webkit-text-stroke:0.2px #262626;">F1000023</div>
<div class="t" style="left:99.28px;top:249.56px;font-size:15.4px;color:#262626;font-weight:normal;font-style:normal;transform:scaleX(0.9759);transform-origin:left top;-webkit-text-stroke:0.2px #262626;">Fecha</div>
<div class="t" style="left:238.89px;top:249.56px;font-size:15.4px;color:#262626;font-weight:normal;font-style:normal;transform:scaleX(0.9900);transform-origin:left top;-webkit-text-stroke:0.2px #262626;">17/04/2018</div>
<div class="t" style="left:99.76px;top:269.46px;font-size:15.4px;color:#262626;font-weight:normal;font-style:normal;transform:scaleX(0.9854);transform-origin:left top;-webkit-text-stroke:0.2px #262626;">Cliente</div>
<div class="t" style="left:180.02px;top:269.46px;font-size:15.4px;color:#262626;font-weight:bold;font-style:normal;transform:scaleX(0.9801);transform-origin:left top;-webkit-text-stroke:0.2px #262626;">pc oliva S.L.</div>
<div class="t" style="left:227.10px;top:289.26px;font-size:15.4px;color:#262626;font-weight:normal;font-style:normal;transform:scaleX(0.9034);transform-origin:left top;-webkit-text-stroke:0.2px #262626;">VERDADERO</div>
<div class="r" style="left:95.50px;top:225.50px;width:224.10px;height:80.70px;border:2px solid #111"></div>
<div class="r" style="left:96.80px;top:285.40px;width:79.10px;height:18.00px;background:#f5f39a;border:1px solid #333"></div>
<div class="r" style="left:103.70px;top:288.80px;width:10.20px;height:10.20px;background:#fff;border-top:1.5px solid #888;border-left:1.5px solid #888;border-right:1px solid #ddd;border-bottom:1px solid #ddd"></div>
<svg class="r" style="left:104px;top:289px" width="10" height="10" viewBox="104 289 10 10"><path d="M105.5 293.5l2.3 2.8 4.5-5.5" stroke="#000" stroke-width="1.8" fill="none"/></svg>
<div class="t" style="left:121.96px;top:288.71px;font-size:10.5px;color:#222;font-weight:normal;font-style:normal;transform:scaleX(0.9845);transform-origin:left top;-webkit-text-stroke:0.2px #222;">Pago Tarjeta</div>
<div class="r" style="left:97.00px;top:345.50px;width:473.00px;height:40.00px;background:#92d050"></div>
<div class="r" style="left:97.00px;top:406.20px;width:299.00px;height:20.10px;background:#99cc00"></div>
<div class="r" style="left:473.50px;top:406.20px;width:96.50px;height:20.10px;background:#99cc00"></div>
<div class="r" style="left:97.00px;top:446.30px;width:299.00px;height:20.00px;background:#99cc00"></div>
<div class="r" style="left:473.50px;top:446.30px;width:96.50px;height:20.00px;background:#99cc00"></div>
<div class="r" style="left:97.00px;top:486.30px;width:299.00px;height:19.90px;background:#99cc00"></div>
<div class="r" style="left:473.50px;top:486.30px;width:96.50px;height:19.90px;background:#99cc00"></div>
<div class="r" style="left:176.50px;top:345.50px;width:1.00px;height:160.70px;background:#000"></div>
<div class="r" style="left:318.00px;top:345.50px;width:1.00px;height:160.70px;background:#000"></div>
<div class="r" style="left:395.50px;top:345.50px;width:1.00px;height:160.70px;background:#000"></div>
<div class="r" style="left:473.00px;top:345.50px;width:1.00px;height:160.70px;background:#000"></div>
<div class="r" style="left:396.00px;top:405.70px;width:77.50px;height:1.00px;background:#000"></div>
<div class="r" style="left:396.00px;top:425.80px;width:77.50px;height:1.00px;background:#000"></div>
<div class="r" style="left:396.00px;top:445.80px;width:77.50px;height:1.00px;background:#000"></div>
<div class="r" style="left:396.00px;top:465.80px;width:77.50px;height:1.00px;background:#000"></div>
<div class="r" style="left:396.00px;top:485.80px;width:77.50px;height:1.00px;background:#000"></div>
<div class="r" style="left:97.00px;top:384.50px;width:473.00px;height:2.00px;background:#000"></div>
<div class="r" style="left:95.50px;top:344.20px;width:475.60px;height:162.20px;border:2px solid #111"></div>
<div class="t" style="left:110.46px;top:357.26px;font-size:15.4px;color:#fff;font-weight:bold;font-style:normal;transform:scaleX(1.0184);transform-origin:left top;-webkit-text-stroke:0.2px #fff;">Código</div>
<div class="t" style="left:213.19px;top:357.26px;font-size:15.4px;color:#262626;font-weight:bold;font-style:normal;transform:scaleX(1.0121);transform-origin:left top;-webkit-text-stroke:0.2px #262626;">Producto</div>
<div class="t" style="left:324.57px;top:357.26px;font-size:15.4px;color:#fff;font-weight:bold;font-style:normal;transform:scaleX(1.0117);transform-origin:left top;-webkit-text-stroke:0.2px #fff;">Cantidad</div>
<div class="t" style="left:411.09px;top:347.96px;font-size:15.4px;color:#262626;font-weight:bold;font-style:normal;transform:scaleX(1.0088);transform-origin:left top;-webkit-text-stroke:0.2px #262626;">Precio</div>
<div class="t" style="left:408.50px;top:367.96px;font-size:15.4px;color:#262626;font-weight:bold;font-style:normal;transform:scaleX(1.0303);transform-origin:left top;-webkit-text-stroke:0.2px #262626;">Unidad</div>
<div class="t" style="left:476.18px;top:347.96px;font-size:15.4px;color:#262626;font-weight:bold;font-style:normal;transform:scaleX(1.0215);transform-origin:left top;-webkit-text-stroke:0.2px #262626;">Precio Total</div>
<div class="t" style="right:851.20px;top:389.46px;font-size:15.4px;color:#262626;font-weight:normal;font-style:normal;-webkit-text-stroke:0.2px #262626;">2</div>
<div class="t" style="left:179.55px;top:389.46px;font-size:15.4px;color:#262626;font-weight:normal;font-style:normal;-webkit-text-stroke:0.2px #262626;">Microprocesador</div>
<div class="t" style="right:631.20px;top:389.46px;font-size:15.4px;color:#262626;font-weight:normal;font-style:normal;-webkit-text-stroke:0.2px #262626;">5</div>
<div class="t" style="right:553.20px;top:389.46px;font-size:15.4px;color:#262626;font-weight:normal;font-style:normal;-webkit-text-stroke:0.2px #262626;">150,80 €</div>
<div class="t" style="right:457.40px;top:389.46px;font-size:15.4px;color:#262626;font-weight:normal;font-style:normal;-webkit-text-stroke:0.2px #262626;">754,00 €</div>
<div class="t" style="right:851.20px;top:409.56px;font-size:15.4px;color:#262626;font-weight:normal;font-style:normal;-webkit-text-stroke:0.2px #262626;">4</div>
<div class="t" style="left:179.55px;top:409.56px;font-size:15.4px;color:#262626;font-weight:normal;font-style:normal;-webkit-text-stroke:0.2px #262626;">Pen Drive 16 Gb</div>
<div class="t" style="right:631.20px;top:409.56px;font-size:15.4px;color:#262626;font-weight:normal;font-style:normal;-webkit-text-stroke:0.2px #262626;">2</div>
<div class="t" style="right:553.20px;top:409.56px;font-size:15.4px;color:#262626;font-weight:normal;font-style:normal;-webkit-text-stroke:0.2px #262626;">10,00 €</div>
<div class="t" style="right:457.40px;top:409.56px;font-size:15.4px;color:#262626;font-weight:normal;font-style:normal;-webkit-text-stroke:0.2px #262626;">20,00 €</div>
<div class="t" style="right:851.20px;top:429.56px;font-size:15.4px;color:#262626;font-weight:normal;font-style:normal;-webkit-text-stroke:0.2px #262626;">5</div>
<div class="t" style="left:179.55px;top:429.56px;font-size:15.4px;color:#262626;font-weight:normal;font-style:normal;-webkit-text-stroke:0.2px #262626;">Disco Duro 1 Tb</div>
<div class="t" style="right:631.20px;top:429.56px;font-size:15.4px;color:#262626;font-weight:normal;font-style:normal;-webkit-text-stroke:0.2px #262626;">1</div>
<div class="t" style="right:553.20px;top:429.56px;font-size:15.4px;color:#262626;font-weight:normal;font-style:normal;-webkit-text-stroke:0.2px #262626;">110,00 €</div>
<div class="t" style="right:457.40px;top:429.56px;font-size:15.4px;color:#262626;font-weight:normal;font-style:normal;-webkit-text-stroke:0.2px #262626;">110,00 €</div>
<div class="t" style="right:851.20px;top:449.56px;font-size:15.4px;color:#262626;font-weight:normal;font-style:normal;-webkit-text-stroke:0.2px #262626;">7</div>
<div class="t" style="left:179.55px;top:449.56px;font-size:15.4px;color:#262626;font-weight:normal;font-style:normal;-webkit-text-stroke:0.2px #262626;">Ratón</div>
<div class="t" style="right:631.20px;top:449.56px;font-size:15.4px;color:#262626;font-weight:normal;font-style:normal;-webkit-text-stroke:0.2px #262626;">6</div>
<div class="t" style="right:553.20px;top:449.56px;font-size:15.4px;color:#262626;font-weight:normal;font-style:normal;-webkit-text-stroke:0.2px #262626;">3,90 €</div>
<div class="t" style="right:457.40px;top:449.56px;font-size:15.4px;color:#262626;font-weight:normal;font-style:normal;-webkit-text-stroke:0.2px #262626;">23,40 €</div>
<div class="t" style="right:851.20px;top:469.56px;font-size:15.4px;color:#262626;font-weight:normal;font-style:normal;-webkit-text-stroke:0.2px #262626;">3</div>
<div class="t" style="left:179.55px;top:469.56px;font-size:15.4px;color:#262626;font-weight:normal;font-style:normal;-webkit-text-stroke:0.2px #262626;">Lector Combo DVD</div>
<div class="t" style="right:631.20px;top:469.56px;font-size:15.4px;color:#262626;font-weight:normal;font-style:normal;-webkit-text-stroke:0.2px #262626;">10</div>
<div class="t" style="right:553.20px;top:469.56px;font-size:15.4px;color:#262626;font-weight:normal;font-style:normal;-webkit-text-stroke:0.2px #262626;">50,00 €</div>
<div class="t" style="right:457.40px;top:469.56px;font-size:15.4px;color:#262626;font-weight:normal;font-style:normal;-webkit-text-stroke:0.2px #262626;">500,00 €</div>
<div class="t" style="right:851.20px;top:489.46px;font-size:15.4px;color:#262626;font-weight:normal;font-style:normal;-webkit-text-stroke:0.2px #262626;">8</div>
<div class="t" style="left:180.80px;top:489.46px;font-size:15.4px;color:#262626;font-weight:normal;font-style:normal;-webkit-text-stroke:0.2px #262626;">Altavoces</div>
<div class="t" style="right:631.20px;top:489.46px;font-size:15.4px;color:#262626;font-weight:normal;font-style:normal;-webkit-text-stroke:0.2px #262626;">10</div>
<div class="t" style="right:553.20px;top:489.46px;font-size:15.4px;color:#262626;font-weight:normal;font-style:normal;-webkit-text-stroke:0.2px #262626;">18,00 €</div>
<div class="t" style="right:457.40px;top:489.46px;font-size:15.4px;color:#262626;font-weight:normal;font-style:normal;-webkit-text-stroke:0.2px #262626;">180,00 €</div>
<div class="r" style="left:176.00px;top:385.00px;width:143.00px;height:21.70px;border:2px solid #217346"></div>
<div class="r" style="left:316.00px;top:404.20px;width:5.00px;height:5.00px;background:#217346;border:1px solid #fff"></div>
<div class="r" style="left:473.50px;top:545.30px;width:96.50px;height:19.30px;background:#99cc00"></div>
<div class="r" style="left:473.50px;top:544.80px;width:96.50px;height:1.00px;background:#555"></div>
<div class="r" style="left:473.50px;top:564.10px;width:96.50px;height:1.00px;background:#555"></div>
<div class="r" style="left:473.00px;top:525.30px;width:97.50px;height:58.70px;border:1px solid #111"></div>
<div class="t" style="left:400.38px;top:528.56px;font-size:15.4px;color:#262626;font-weight:bold;font-style:italic;transform:scaleX(0.9813);transform-origin:left top;-webkit-text-stroke:0.2px #262626;">Suma</div>
<div class="t" style="left:398.89px;top:547.86px;font-size:15.4px;color:#262626;font-weight:normal;font-style:normal;transform:scaleX(0.9714);transform-origin:left top;-webkit-text-stroke:0.2px #262626;">Descuento</div>
<div class="t" style="left:400.24px;top:566.76px;font-size:15.4px;color:#262626;font-weight:bold;font-style:italic;transform:scaleX(1.0465);transform-origin:left top;-webkit-text-stroke:0.2px #262626;">IVA</div>
<div class="t" style="right:457.40px;top:528.56px;font-size:15.4px;color:#262626;font-weight:normal;font-style:normal;-webkit-text-stroke:0.2px #262626;">1.587,40 €</div>
<div class="t" style="right:457.40px;top:547.86px;font-size:15.4px;color:#262626;font-weight:normal;font-style:normal;-webkit-text-stroke:0.2px #262626;">0,00 €</div>
<div class="t" style="right:457.40px;top:566.76px;font-size:15.4px;color:#262626;font-weight:normal;font-style:normal;-webkit-text-stroke:0.2px #262626;">333,35</div>
<svg class="r" style="left:0;top:0" width="1024" height="601" viewBox="0 0 1024 601">
<defs>
<filter id="er" x="-10%" y="-10%" width="120%" height="120%"><feMorphology operator="erode" radius="1.0"/></filter>
<filter id="sh" x="-10%" y="-10%" width="130%" height="130%"><feGaussianBlur stdDeviation="1.6"/></filter>
<g id="wa" font-family="Liberation Sans" font-weight="bold" font-size="61" stroke-linejoin="round"><text transform="translate(592.58 300.8) scale(0.755 1.0)">B</text><text transform="translate(630.92 300.8) scale(0.846 1.0)">u</text><text transform="translate(668.42 300.8) scale(0.663 1.0)">s</text><text transform="translate(696.98 300.8) scale(0.683 1.0)">c</text><text transform="translate(725.95 300.8) scale(0.696 1.0)">a</text><text transform="translate(759.10 300.8) scale(0.852 1.0)">r</text><text transform="translate(783.60 300.8) scale(0.910 1.0)">V</text><text transform="translate(839.58 300.8) scale(0.889 1.0)">+</text><text transform="translate(890.00 300.8) scale(0.826 1.06)">l</text><text transform="translate(908.64 300.8) scale(0.815 1.06)">i</text><text transform="translate(925.30 300.8) scale(0.670 1.0)">s</text><text transform="translate(953.50 300.8) scale(0.945 1.06)">t</text><text transform="translate(978.99 300.8) scale(0.726 1.0)">a</text><text transform="translate(628.19 386.4) scale(0.883 1.06)">d</text><text transform="translate(666.35 386.4) scale(0.853 1.0)">e</text><text transform="translate(701.63 386.4) scale(0.656 1.0)">s</text><text transform="translate(728.34 386.4) scale(0.920 1.0)">p</text><text transform="translate(766.63 386.4) scale(0.689 1.06)">l</text><text transform="translate(783.14 386.4) scale(0.910 1.0)">e</text><text transform="translate(816.45 386.4) scale(0.854 1.0)">g</text><text transform="translate(851.87 386.4) scale(0.738 1.0)">a</text><text transform="translate(884.86 386.4) scale(0.913 1.06)">b</text><text transform="translate(923.48 386.4) scale(0.780 1.06)">l</text><text transform="translate(940.08 386.4) scale(0.886 1.0)">e</text></g>
</defs>
<use href="#wa" fill="#000" fill-opacity="0.25" stroke="#000" stroke-opacity="0.25" stroke-width="4" transform="translate(1 2.5)" filter="url(#sh)"/>
<use href="#wa" fill="#c0a064" stroke="#c0a064" stroke-width="4.2"/>
<use href="#wa" fill="#dcec98" stroke="#dcec98" stroke-width="2.4"/>
<use href="#wa" fill="#92c352" stroke="#92c352" stroke-width="2.4" filter="url(#er)"/>
</svg>
</body></html>
